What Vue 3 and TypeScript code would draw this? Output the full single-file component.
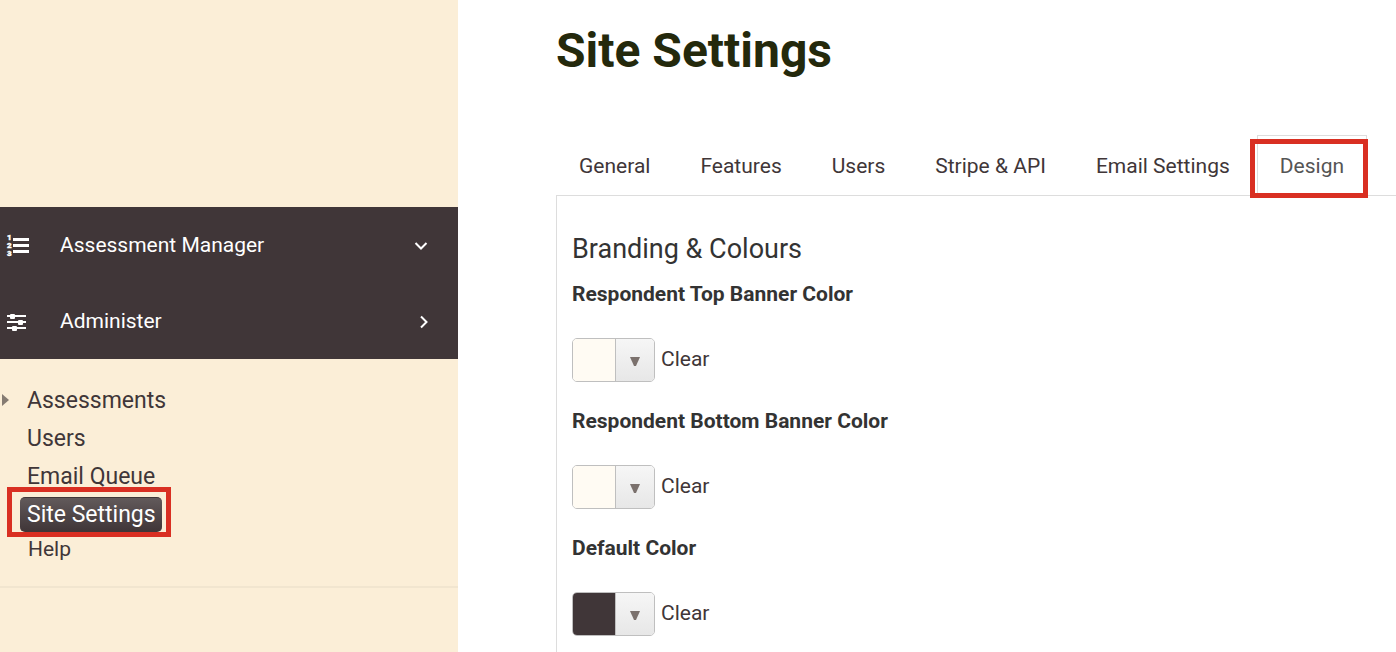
<script setup lang="ts">
import { ref } from 'vue'

interface ColorSetting {
  id: string
  label: string
  color: string
}

const tabs = ['General', 'Features', 'Users', 'Stripe & API', 'Email Settings', 'Design']
const activeTab = ref('Design')

const pages = ['Assessments', 'Users', 'Email Queue', 'Site Settings']
const activePage = ref('Site Settings')

const settings = ref<ColorSetting[]>([
  { id: 'top-banner', label: 'Respondent Top Banner Color', color: '#fffbf3' },
  { id: 'bottom-banner', label: 'Respondent Bottom Banner Color', color: '#fffbf3' },
  { id: 'default', label: 'Default Color', color: '#403638' },
])

function clearColor(setting: ColorSetting) {
  setting.color = '#ffffff'
}
</script>

<template>
  <div class="layout">
    <aside class="sidebar">
      <nav class="sections" aria-label="Sections">
        <button class="section" type="button" aria-expanded="true">
          <svg class="section-icon" viewBox="0 0 24 24" aria-hidden="true">
            <g fill="#fff" font-family="Roboto, sans-serif" font-size="8" font-weight="900" stroke="#fff" stroke-width="0.4">
              <text x="1" y="7">1</text>
              <text x="1" y="15">2</text>
              <text x="1" y="23">3</text>
            </g>
            <path d="M7 5h16v3H7zM7 11h16v3H7zM7 17h16v3H7z" fill="#fff" />
          </svg>
          <span class="section-name">Assessment Manager</span>
          <svg class="chevron" viewBox="0 0 16 16" aria-hidden="true">
            <path d="M1.500 6L7 11.500L12.500 6" fill="none" stroke="#fff" stroke-width="2" />
          </svg>
        </button>
        <button class="section" type="button" aria-expanded="false">
          <svg class="section-icon" viewBox="0 0 24 24" aria-hidden="true">
            <path d="M1 7h19M1 13h19M1 19h19" stroke="#fff" stroke-width="2" />
            <rect x="4" y="5" width="5" height="5" rx="1" fill="#fff" />
            <rect x="12" y="11" width="5" height="5" rx="1" fill="#fff" />
            <rect x="6" y="17" width="5" height="5" rx="1" fill="#fff" />
          </svg>
          <span class="section-name">Administer</span>
          <svg class="chevron" viewBox="0 0 16 16" aria-hidden="true">
            <path d="M7 3.500L12.500 9L7 14.500" fill="none" stroke="#fff" stroke-width="2" />
          </svg>
        </button>
      </nav>
      <nav class="pages" aria-label="Pages">
        <ul>
          <li v-for="page in pages" :key="page">
            <svg v-if="page === 'Assessments'" class="expander" viewBox="0 0 8 12" aria-hidden="true">
              <path d="M0 0l7 6-7 6z" fill="#857b72" />
            </svg>
            <a href="#" :class="{ current: page === activePage }" @click.prevent="activePage = page">
              {{ page }}
              <span v-if="page === 'Site Settings'" class="marker marker-page" aria-hidden="true"></span>
            </a>
          </li>
          <li class="help"><a href="#">Help</a></li>
        </ul>
      </nav>
    </aside>

    <main class="main">
      <h1>Site Settings</h1>
      <div class="tabs" role="tablist">
        <button
          v-for="tab in tabs"
          :key="tab"
          class="tab"
          :class="{ active: tab === activeTab }"
          type="button"
          role="tab"
          :aria-selected="tab === activeTab"
          @click="activeTab = tab"
        >
          {{ tab }}
          <span v-if="tab === 'Design'" class="marker marker-tab" aria-hidden="true"></span>
        </button>
      </div>
      <section class="panel" role="tabpanel">
        <h2>Branding &amp; Colours</h2>
        <div v-for="setting in settings" :key="setting.id" class="setting">
          <label :for="setting.id">{{ setting.label }}</label>
          <div class="controls">
            <button :id="setting.id" class="picker" type="button">
              <span class="swatch" :style="{ backgroundColor: setting.color }"></span>
              <span class="arrow">
                <svg viewBox="0 0 10 10" aria-hidden="true">
                  <path d="M0 0h10L6 9H4z" fill="#7b716d" />
                </svg>
              </span>
            </button>
            <button class="clear" type="button" @click="clearColor(setting)">Clear</button>
          </div>
        </div>
      </section>
    </main>
  </div>
</template>

<style>
body {
  margin: 0;
  background: #fff;
}
</style>

<style scoped>
.layout {
  display: flex;
  height: 100vh;
  overflow: hidden;
  font-family: Roboto, 'Liberation Sans', sans-serif;
  font-size: 21px;
  line-height: 24px;
  color: #403638;
}

button {
  font: inherit;
  color: inherit;
  background: none;
  border: 0;
  padding: 0;
  cursor: pointer;
}

a {
  color: inherit;
  text-decoration: none;
}

.sidebar {
  flex: 0 0 458px;
  box-sizing: border-box;
  padding-top: 207px;
  background: #fbeed7;
}

.sections {
  background: #403638;
  color: #fff;
}

.section {
  display: flex;
  align-items: center;
  width: 100%;
  height: 76px;
  padding: 0 28px 0 6px;
  text-align: left;
}

.section-icon {
  width: 24px;
  height: 24px;
}

.section-name {
  flex: 1;
  padding-left: 30px;
}

.chevron {
  width: 16px;
  height: 16px;
}

.pages {
  border-bottom: 2px solid #f1e5cf;
  padding: 22px 0 21px;
}

.pages ul {
  list-style: none;
  margin: 0;
  padding: 0 0 0 20px;
}

.pages li {
  position: relative;
  display: flex;
  align-items: center;
  height: 38px;
  font-size: 23px;
}

.pages a {
  position: relative;
  padding: 4px 6px 4px 7px;
  border: 1px solid transparent;
  border-width: 1px 0;
  border-radius: 5px;
  line-height: 25px;
}

.pages a.current {
  color: #fff;
  border-color: #403638;
  background: linear-gradient(#625a5b, #403638);
}

.pages .help {
  height: 32px;
  font-size: 21px;
  padding-left: 1px;
}

.expander {
  position: absolute;
  left: -18px;
  width: 8px;
  height: 12px;
}

.marker {
  position: absolute;
  border: 5px solid #d92f22;
  pointer-events: none;
}

.marker-page {
  inset: -11px -9px -6px -13px;
}

.marker-tab {
  inset: 3px -2px -2px -8px;
}

.main {
  flex: 1;
  min-width: 0;
  display: flex;
  flex-direction: column;
  padding: 23px 0 0 98px;
}

h1 {
  margin: 0;
  font-size: 48px;
  line-height: 56px;
  font-weight: 700;
  color: #24290c;
}

.tabs {
  display: flex;
  gap: 4px;
  margin-top: 56px;
}

.tab {
  position: relative;
  height: 61px;
  padding: 0 22px;
  border: 1px solid transparent;
  border-bottom: 0;
  margin-bottom: -1px;
  white-space: nowrap;
}

.tab.active {
  color: #555;
  background: #fff;
  border-color: #ddd;
}

.panel {
  flex: 1;
  padding: 37px 15px 0;
  border: 1px solid #ddd;
  border-width: 1px 0 0 1px;
}

h2 {
  margin: 0;
  font-size: 27px;
  line-height: 32px;
  font-weight: 400;
  color: #333;
}

.setting {
  padding-top: 17px;
  margin-bottom: 10px;
}

.setting label {
  display: block;
  font-weight: 700;
  color: #333;
}

.controls {
  display: flex;
  align-items: center;
  gap: 6px;
  margin-top: 32px;
}

.picker {
  display: flex;
  box-sizing: border-box;
  width: 83px;
  height: 44px;
  border: 1px solid #bfbfbf;
  border-radius: 5px;
  overflow: hidden;
}

.clear {
  padding-bottom: 2px;
}

.swatch {
  width: 42px;
  height: 42px;
}

.arrow {
  flex: 1;
  display: grid;
  place-items: center;
  height: 42px;
  border-left: 1px solid #bfbfbf;
  background: linear-gradient(#f6f6f6, #e7e7e7);
}

.arrow svg {
  width: 10px;
  height: 10px;
  padding-top: 4px;
}
</style>
